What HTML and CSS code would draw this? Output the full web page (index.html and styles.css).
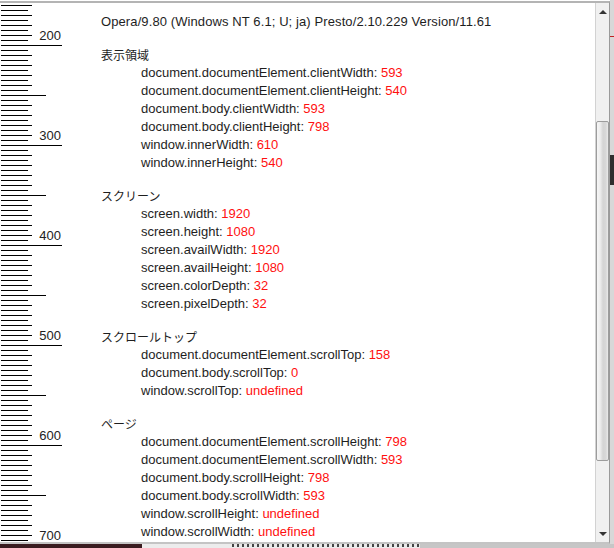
FILE: index.html
```html
<!DOCTYPE html>
<html lang="ja">
<head>
<meta charset="utf-8">
<title>Opera window info</title>
<link rel="stylesheet" href="styles.css">
</head>
<body>
<div class="screen">
  <div class="window">
    <div class="viewport">
      <div class="ruler">
        <div class="mark first">200</div>
        <div class="mark">300</div>
        <div class="mark">400</div>
        <div class="mark">500</div>
        <div class="mark">600</div>
        <div class="mark">700</div>
      </div>
      <div class="info">
        <div class="ua">Opera/9.80 (Windows NT 6.1; U; ja) Presto/2.10.229 Version/11.61</div>

        <div class="group">
          <div class="head">表示領域</div>
          <div class="item">document.documentElement.clientWidth: <span class="val">593</span></div>
          <div class="item">document.documentElement.clientHeight: <span class="val">540</span></div>
          <div class="item">document.body.clientWidth: <span class="val">593</span></div>
          <div class="item">document.body.clientHeight: <span class="val">798</span></div>
          <div class="item">window.innerWidth: <span class="val">610</span></div>
          <div class="item">window.innerHeight: <span class="val">540</span></div>
        </div>

        <div class="group">
          <div class="head">スクリーン</div>
          <div class="item">screen.width: <span class="val">1920</span></div>
          <div class="item">screen.height: <span class="val">1080</span></div>
          <div class="item">screen.availWidth: <span class="val">1920</span></div>
          <div class="item">screen.availHeight: <span class="val">1080</span></div>
          <div class="item">screen.colorDepth: <span class="val">32</span></div>
          <div class="item">screen.pixelDepth: <span class="val">32</span></div>
        </div>

        <div class="group">
          <div class="head">スクロールトップ</div>
          <div class="item">document.documentElement.scrollTop: <span class="val">158</span></div>
          <div class="item">document.body.scrollTop: <span class="val">0</span></div>
          <div class="item">window.scrollTop: <span class="val">undefined</span></div>
        </div>

        <div class="group">
          <div class="head">ページ</div>
          <div class="item">document.documentElement.scrollHeight: <span class="val">798</span></div>
          <div class="item">document.documentElement.scrollWidth: <span class="val">593</span></div>
          <div class="item">document.body.scrollHeight: <span class="val">798</span></div>
          <div class="item">document.body.scrollWidth: <span class="val">593</span></div>
          <div class="item">window.scrollHeight: <span class="val">undefined</span></div>
          <div class="item">window.scrollWidth: <span class="val">undefined</span></div>
        </div>
      </div>
    </div>
    <div class="scrollbar">
      <div class="sb-btn"><span class="arrow-up"></span></div>
      <div class="sb-track"><div class="sb-thumb"></div></div>
      <div class="sb-btn"><span class="arrow-down"></span></div>
    </div>
  </div>
  <div class="behind-right">
    <div class="br-red"></div>
    <div class="br-dark"></div>
  </div>
</div>
<div class="behind-bottom">
  <div class="bb-dark"></div>
  <div class="bb-text"></div>
  <div class="bb-gray"></div>
</div>
</body>
</html>
```

FILE: styles.css
```css
html, body {
  margin: 0;
  padding: 0;
  background: #ffffff;
}

body {
  width: 614px;
  height: 548px;
  overflow: hidden;
  font-family: "Liberation Sans", "Noto Sans CJK JP", sans-serif;
  font-size: 13px;
  line-height: 18px;
  color: #1e1e1e;
}

.screen {
  display: flex;
  height: 544px;
  background: #ffffff;
}

.window {
  width: 610px;
  height: 543px;
  margin-top: 1px;
  box-sizing: border-box;
  border-top: 2px solid #b4b4b4;
  border-bottom: 2px solid #c4c4c4;
  border-right: 1px solid #9a9a9a;
  background: #ffffff;
  display: flex;
  flex: none;
}

.viewport {
  width: 595px;
  flex: none;
  display: flex;
  overflow: hidden;
}

.ruler {
  width: 62px;
  flex: none;
  background-image:
    linear-gradient(to bottom, transparent 42px, #000 42px, #000 43px, transparent 43px),
    linear-gradient(to bottom, transparent 42px, #000 42px, #000 43px, transparent 43px),
    linear-gradient(to bottom, transparent 2px, #000 2px, #000 3px, transparent 3px),
    linear-gradient(to bottom, transparent 2px, #000 2px, #000 3px, transparent 3px);
  background-size: 61px 100px, 45px 50px, 31px 10px, 27px 5px;
  background-position: 1px 0, 1px 0, 1px 0, 1px 0;
  background-repeat: repeat-y;
}

.mark {
  height: 100px;
  display: flex;
  align-items: flex-end;
  justify-content: flex-end;
  padding-right: 1px;
  color: #222;
}

.mark.first {
  height: 42px;
}

.info {
  margin-left: 39px;
  padding-top: 10px;
  white-space: nowrap;
}

.ua {
  letter-spacing: 0.1px;
}

.group {
  margin-top: 15px;
}

.head {
  font-size: 12px;
  font-family: "Noto Sans CJK JP", sans-serif;
  line-height: 18px;
  height: 18px;
}

.item {
  padding-left: 40px;
}

.val {
  color: #ff1010;
}

.scrollbar {
  width: 14px;
  flex: none;
  box-sizing: border-box;
  background: #f0f0f0;
  border-left: 1px solid #d2d2d2;
  display: flex;
  flex-direction: column;
}

.sb-btn {
  height: 17px;
  flex: none;
  display: flex;
  align-items: center;
  justify-content: center;
}

.arrow-up {
  width: 0;
  height: 0;
  border-left: 4px solid transparent;
  border-right: 4px solid transparent;
  border-bottom: 4px solid #333;
}

.arrow-down {
  width: 0;
  height: 0;
  border-left: 4px solid transparent;
  border-right: 4px solid transparent;
  border-top: 4px solid #333;
}

.sb-track {
  flex: 1;
}

.sb-thumb {
  margin-top: 101px;
  height: 340px;
  box-sizing: border-box;
  border: 1px solid #9c9c9c;
  border-radius: 2px;
  background: linear-gradient(to right, #f6f6f6 0%, #ececec 30%, #d4d4d4 55%, #d8d8d8 80%, #eaeaea 100%);
}

.behind-right {
  width: 4px;
  flex: none;
  background: #d8d8d8;
  display: flex;
  flex-direction: column;
}

.br-red {
  margin-top: 36px;
  height: 1px;
  background: #c02020;
}

.br-dark {
  margin-top: 118px;
  height: 30px;
  background: #2e2e2e;
}

.behind-bottom {
  display: flex;
  height: 4px;
}

.bb-dark {
  width: 142px;
  background: #3a1c20;
}

.bb-text {
  width: 278px;
  background:
    repeating-linear-gradient(to right, #444 0, #444 2px, #e8e8e8 2px, #e8e8e8 5px) 90px 0 / 190px 3px no-repeat,
    #ececec;
}

.bb-gray {
  flex: 1;
  background: #c6c6c6;
}
```
